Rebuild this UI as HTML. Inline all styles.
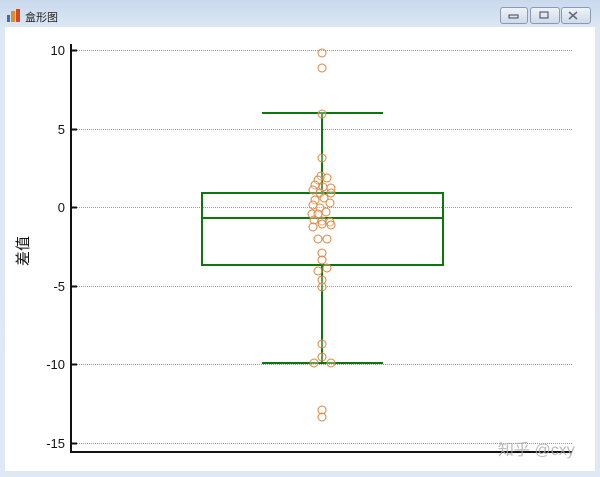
<!DOCTYPE html>
<html><head><meta charset="utf-8"><style>
body{margin:0;width:600px;height:477px;overflow:hidden;background:#dbe6f2;font-family:"Liberation Sans","Noto Sans CJK SC",sans-serif}
.win{position:absolute;left:0;top:0;width:600px;height:477px;background:linear-gradient(#c9d9ec,#dde8f4 30px,#dfe9f5)}
.client{position:absolute;left:5px;top:27px;width:590px;height:444px;background:#fff}
.title{position:absolute;left:25px;top:9px;font-size:11px;color:#222}
.btn{position:absolute;top:7px;height:15px;border:1px solid #8a9ab0;border-radius:3px;background:linear-gradient(#eef3f9,#cfdbe9)}
</style></head><body>
<div class="win">
<svg style="position:absolute;left:7px;top:9px" width="14" height="14"><rect x="0" y="6" width="3" height="7" fill="#3a6fb8"/><rect x="4" y="2" width="4" height="11" fill="#e28a2a"/><rect x="9" y="0" width="4" height="13" fill="#d04a2a"/></svg>
<div class="title">盒形图</div>
<div class="btn" style="left:500px;width:26px"></div>
<div class="btn" style="left:530px;width:28px"></div>
<div class="btn" style="left:561px;width:28px"></div>
<svg style="position:absolute;left:500px;top:7px" width="92" height="17"><rect x="9" y="8" width="9" height="3" fill="none" stroke="#445" stroke-width="1"/><rect x="40" y="5" width="8" height="6" fill="none" stroke="#445"/><path d="M69 5 L77 12 M77 5 L69 12" stroke="#667" stroke-width="1.5"/></svg>
<div class="client"></div>
<svg style="position:absolute;left:0;top:0" width="600" height="477">
<g stroke="#999" stroke-dasharray="1,1" stroke-width="1">
<line x1="71" y1="50.5" x2="572" y2="50.5"/><line x1="71" y1="129.5" x2="572" y2="129.5"/><line x1="71" y1="207.5" x2="572" y2="207.5"/><line x1="71" y1="286.5" x2="572" y2="286.5"/><line x1="71" y1="364.5" x2="572" y2="364.5"/><line x1="71" y1="443.5" x2="572" y2="443.5"/>
</g>
<g stroke="#111" stroke-width="2" fill="none">
<path d="M71 44 V452 H572"/>
<path d="M71 50.5h6M71 129.5h6M71 207.5h6M71 286.5h6M71 364.5h6M71 443.5h6"/>
</g>
<g font-size="13" fill="#111" text-anchor="end">
<text x="65" y="55">10</text><text x="65" y="134">5</text><text x="65" y="212">0</text><text x="65" y="291">-5</text><text x="65" y="369">-10</text><text x="65" y="448">-15</text>
</g>
<text x="28" y="251" font-size="15" fill="#111" transform="rotate(-90 28 251)" text-anchor="middle">差值</text>
<g stroke="#0a780a" stroke-width="2" fill="none">
<rect x="202" y="193" width="241" height="72"/>
<line x1="202" y1="218" x2="443" y2="218"/>
<line x1="262" y1="113" x2="383" y2="113"/><line x1="262" y1="363" x2="383" y2="363"/>
<line x1="322" y1="113" x2="322" y2="193"/><line x1="322" y1="265" x2="322" y2="363"/>
</g>
<g stroke="#e0833a" stroke-width="1" fill="#fff" fill-opacity="0.3">
<circle cx="322" cy="53" r="4"/><circle cx="322" cy="68" r="4"/><circle cx="322" cy="114" r="4"/><circle cx="322" cy="158" r="4"/>
<circle cx="321" cy="176" r="4"/><circle cx="318" cy="180" r="4"/><circle cx="327" cy="178" r="4"/><circle cx="315" cy="185" r="4"/><circle cx="323" cy="187" r="4"/><circle cx="331" cy="188" r="4"/><circle cx="313" cy="190" r="4"/><circle cx="320" cy="193" r="4"/><circle cx="331" cy="193" r="4"/><circle cx="315" cy="200" r="4"/><circle cx="324" cy="198" r="4"/><circle cx="313" cy="205" r="4"/><circle cx="320" cy="208" r="4"/><circle cx="330" cy="203" r="4"/><circle cx="312" cy="214" r="4"/><circle cx="318" cy="214" r="4"/><circle cx="326" cy="212" r="4"/><circle cx="314" cy="220" r="4"/><circle cx="322" cy="221" r="4"/><circle cx="330" cy="222" r="4"/><circle cx="313" cy="227" r="4"/><circle cx="322" cy="224" r="4"/><circle cx="331" cy="225" r="4"/><circle cx="318" cy="239" r="4"/><circle cx="327" cy="239" r="4"/><circle cx="322" cy="253" r="4"/><circle cx="322" cy="260" r="4"/><circle cx="327" cy="268" r="4"/><circle cx="318" cy="271" r="4"/><circle cx="322" cy="280" r="4"/><circle cx="322" cy="287" r="4"/><circle cx="322" cy="344" r="4"/><circle cx="314" cy="363" r="4"/><circle cx="331" cy="363" r="4"/><circle cx="322" cy="357" r="4"/><circle cx="322" cy="410" r="4"/><circle cx="322" cy="417" r="4"/>
</g>
<text x="498" y="455" font-size="16" fill="#aaa" fill-opacity="0.8">知乎 @cxy</text>
</svg>
</div>
</body></html>
